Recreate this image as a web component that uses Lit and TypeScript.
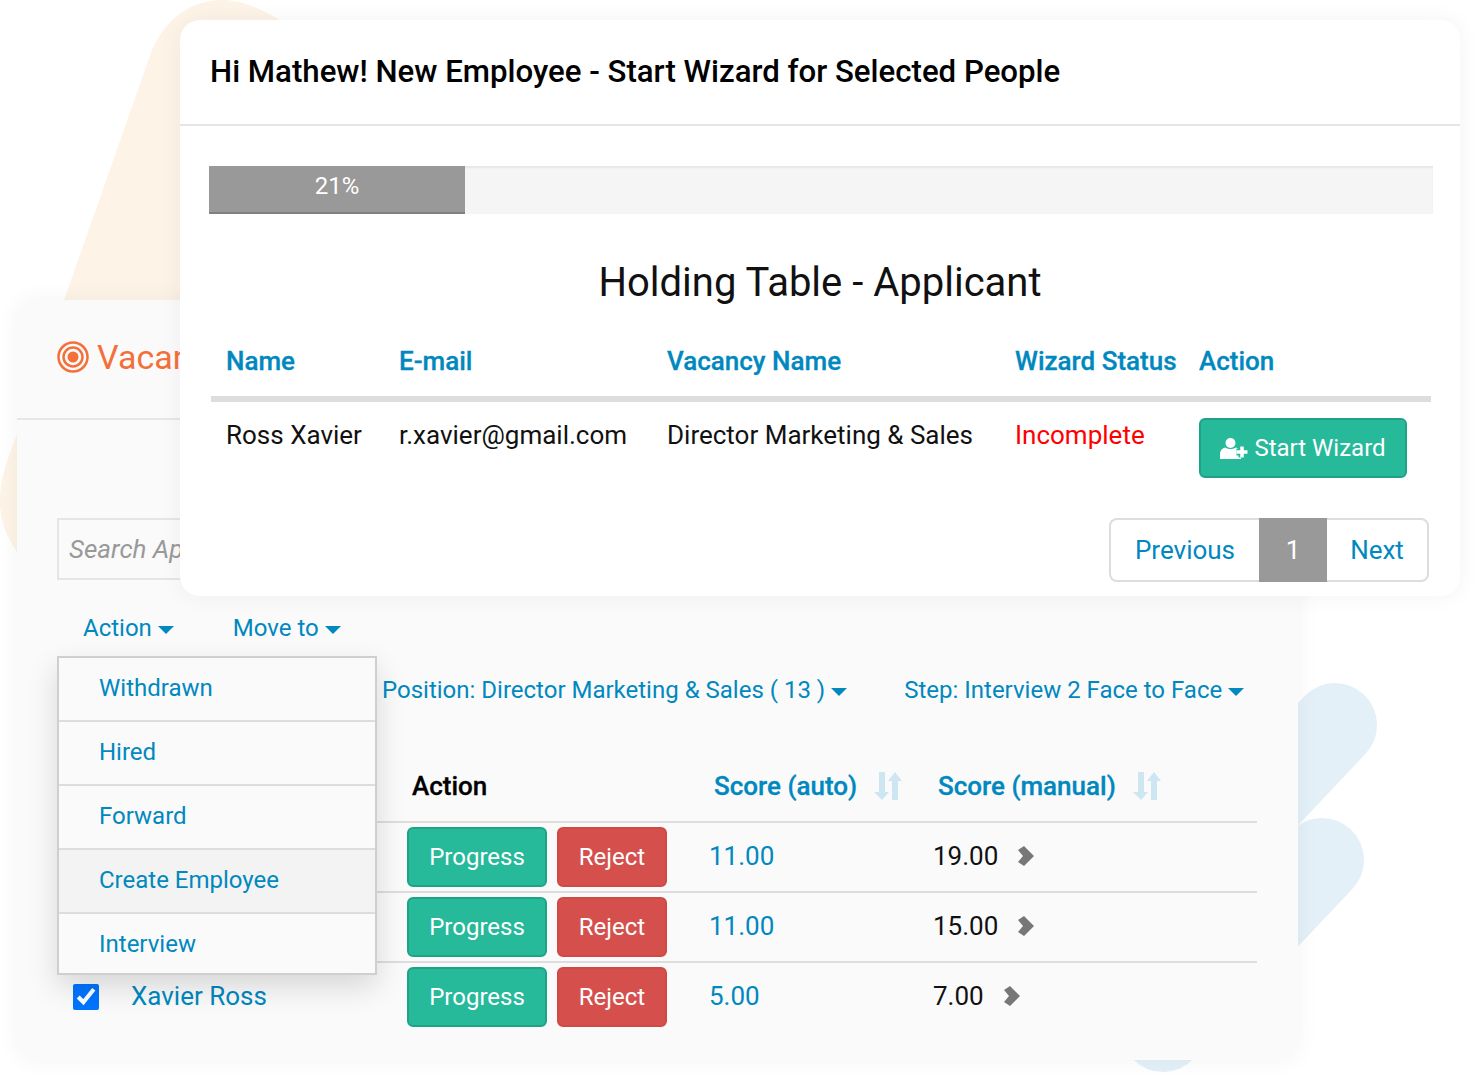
import { LitElement, html, css } from 'lit';
import { customElement } from 'lit/decorators.js';

const sortIcon = html`<svg class="sort" viewBox="0 0 28 28" width="28" height="28">
  <path d="M5 0h6v20h4l-7 8-8-8h5z"/><path d="M21 0l7 9h-4v19h-6V9h-4z"/>
</svg>`;

const chevron = html`<svg class="chev" viewBox="0 0 16 20" width="16" height="20">
  <path d="M0 4l6-4 10 10-10 10-6-4 5-6z"/>
</svg>`;

const applicants = [
  { name: '', auto: '11.00', manual: '19.00' },
  { name: '', auto: '11.00', manual: '15.00' },
  { name: 'Xavier Ross', auto: '5.00', manual: '7.00' },
];

const menuItems = ['Withdrawn', 'Hired', 'Forward', 'Create Employee', 'Interview'];

@customElement('app-root')
export class AppRoot extends LitElement {
  static styles = css`
    :host {
      display: block;
      width: 1481px;
      height: 1080px;
      font-family: Roboto, 'Liberation Sans', sans-serif;
      background: #fff;
      color: #111;
    }
    .stage {
      position: relative;
      width: 1481px;
      height: 1080px;
      overflow: hidden;
    }
    .blobs {
      position: absolute;
      left: 0;
      top: 0;
    }
    .card {
      position: absolute;
      box-sizing: border-box;
      border-radius: 20px;
      box-shadow: 0 0 24px rgba(0, 0, 0, 0.05);
    }
    /* back window */
    .back {
      left: 17px;
      top: 300px;
      width: 1281px;
      height: 760px;
      background: #fafafa;
    }
    .back-head {
      height: 120px;
      box-sizing: border-box;
      border-bottom: 2px solid #e6e6e6;
      padding-left: 40px;
      display: flex;
      align-items: center;
      gap: 8px;
      color: #f4703a;
      font-size: 34px;
      padding-bottom: 4px;
    }
    .back-body {
      padding: 98px 40px 0;
    }
    .search {
      box-sizing: border-box;
      width: 400px;
      height: 62px;
      border: 2px solid #e5e5e5;
      padding: 0 10px;
      display: flex;
      align-items: center;
      font-size: 26px;
      font-style: italic;
      color: #999;
    }
    .link {
      color: #0088bf;
    }
    .caret {
      display: inline-block;
      width: 0;
      height: 0;
      border-left: 8px solid transparent;
      border-right: 8px solid transparent;
      border-top: 8px solid #0088bf;
      vertical-align: middle;
      margin-left: 6px;
    }
    .toolbar {
      display: flex;
      height: 32px;
      margin-top: 32px;
      padding-left: 26px;
      gap: 59px;
      align-items: center;
      font-size: 24px;
    }
    .filters {
      display: flex;
      height: 32px;
      margin-top: 30px;
      padding-left: 325px;
      gap: 57px;
      align-items: center;
      font-size: 24px;
    }
    .grid {
      display: grid;
      grid-template-columns: 350px 303px 224px 323px;
      width: 1200px;
    }
    .thead {
      height: 70px;
      margin-top: 30px;
      padding-top: 15px;
      box-sizing: content-box;
      align-items: center;
      font-size: 26px;
      font-weight: 500;
      -webkit-text-stroke: 0.3px currentColor;
    }
    .thead > div {
      padding-left: 4px;
      display: flex;
      align-items: center;
      color: #0088bf;
    }
    .thead > .plain {
      color: #000;
      padding-left: 5px;
    }
    .sort {
      fill: #cde6f2;
      margin-left: 17px;
    }
    .trow {
      height: 70px;
      box-sizing: border-box;
      border-top: 2px solid #ddd;
      align-items: center;
      font-size: 26px;
    }
    .who {
      display: flex;
      align-items: center;
      padding-left: 16px;
      gap: 32px;
    }
    .who input {
      width: 26px;
      height: 26px;
      margin: 0;
    }
    .who span,
    .score,
    .manual {
      padding-bottom: 2px;
    }
    .score,
    .manual {
      margin-left: -1px;
    }
    .acts {
      display: flex;
      gap: 10px;
    }
    .btn {
      box-sizing: border-box;
      height: 60px;
      border-radius: 6px;
      display: flex;
      align-items: center;
      justify-content: center;
      color: #fff;
      font-size: 24px;
    }
    .green {
      background: #26b99a;
      border: 2px solid #1fa387;
    }
    .red {
      background: #d5504d;
      border: 2px solid #cf4945;
    }
    .w140 {
      width: 140px;
    }
    .w110 {
      width: 110px;
    }
    .manual {
      display: flex;
      align-items: center;
      gap: 20px;
    }
    .chev {
      fill: #777;
      filter: blur(0.4px);
    }
    .menu {
      position: absolute;
      left: 40px;
      top: 356px;
      width: 320px;
      box-sizing: border-box;
      background: #fafafa;
      border: 2px solid #cfcfcf;
      box-shadow: 0 12px 28px rgba(0, 0, 0, 0.14);
      font-size: 24px;
    }
    .menu div {
      height: 64px;
      box-sizing: border-box;
      display: flex;
      align-items: center;
      padding: 0 0 2px 40px;
      border-bottom: 2px solid #ddd;
    }
    .menu div:last-child {
      border-bottom: 0;
      height: 59px;
      padding-bottom: 0;
    }
    .menu .hover {
      background: #f3f3f3;
    }
    /* front window */
    .front {
      left: 180px;
      top: 20px;
      width: 1280px;
      height: 576px;
      background: #fff;
    }
    .front-head {
      height: 106px;
      box-sizing: border-box;
      border-bottom: 2px solid #e6e6e6;
      padding: 0 30px 2px;
      display: flex;
      align-items: center;
      font-size: 31.2px;
      font-weight: 500;
      color: #000;
    }
    .progress {
      display: flex;
      height: 48px;
      margin: 40px 27px 0 29px;
      background: #f5f5f5;
      box-shadow: inset 0 2px 2px rgba(0, 0, 0, 0.06);
    }
    .bar {
      box-sizing: border-box;
      height: 48px;
      background: #999;
      border-bottom: 2px solid #808080;
      color: #fff;
      font-size: 24px;
      text-align: center;
      padding-top: 6px;
    }
    h2 {
      margin: 45px 0 0;
      height: 48px;
      line-height: 48px;
      text-align: center;
      font-size: 40px;
      font-weight: 400;
      color: #111;
    }
    .table {
      margin: 33px 29px 0 31px;
      width: 1220px;
    }
    .cols {
      display: grid;
      grid-template-columns: 173px 268px 348px 184px 232px;
      font-size: 26px;
      padding-left: 15px;
      box-sizing: border-box;
    }
    .cols-head {
      height: 50px;
      padding-top: 6px;
      border-bottom: 6px solid #ddd;
      font-weight: 500;
      -webkit-text-stroke: 0.3px currentColor;
      color: #0088bf;
      box-sizing: content-box;
    }
    .cols-row {
      padding-top: 16px;
    }
    .cols-row > div:not(:last-child) {
      padding-top: 2px;
    }
    .red-text {
      color: #f00;
    }
    .wizard {
      width: 208px;
      gap: 6px;
    }
    .wizard svg {
      flex: none;
    }
    .pager {
      display: flex;
      justify-content: flex-end;
      margin: 40px 31px 0 0;
      font-size: 26px;
    }
    .pager div {
      box-sizing: border-box;
      height: 64px;
      display: flex;
      align-items: center;
      justify-content: center;
      border: 2px solid #ddd;
    }
    .pager .prev {
      width: 150px;
      border-right: 0;
      border-radius: 8px 0 0 8px;
    }
    .pager .cur {
      width: 68px;
      background: #999;
      border-color: #999;
      color: #fff;
    }
    .pager .next {
      width: 102px;
      border-left: 0;
      border-radius: 0 8px 8px 0;
    }
  `;

  renderBack() {
    return html`<section class="card back">
      <div class="back-head">
        <svg viewBox="0 0 32 32" width="32" height="32" fill="none" stroke="#f4703a" stroke-width="2.5">
          <circle cx="16" cy="16" r="14.500"></circle>
          <circle cx="16" cy="16" r="9.500"></circle>
          <circle cx="16" cy="16" r="5.500" fill="#f4703a" stroke="none"></circle>
        </svg>
        <span>Vacancy</span>
      </div>
      <div class="back-body">
        <div class="search">Search Applicant</div>
        <div class="toolbar link">
          <span>Action<i class="caret"></i></span>
          <span>Move to<i class="caret"></i></span>
        </div>
        <div class="filters link">
          <span>Position: Director Marketing &amp; Sales ( 13 )<i class="caret"></i></span>
          <span>Step: Interview 2 Face to Face<i class="caret"></i></span>
        </div>
        <div class="grid thead">
          <div></div>
          <div class="plain">Action</div>
          <div>Score (auto)${sortIcon}</div>
          <div>Score (manual)${sortIcon}</div>
        </div>
        ${applicants.map(
          (a) => html`<div class="grid trow">
            <div class="who">
              <input type="checkbox" checked />
              <span class="link">${a.name}</span>
            </div>
            <div class="acts">
              <div class="btn green w140">Progress</div>
              <div class="btn red w110">Reject</div>
            </div>
            <div class="link score">${a.auto}</div>
            <div class="manual">${a.manual}${chevron}</div>
          </div>`
        )}
      </div>
      <div class="menu link">
        ${menuItems.map(
          (m) => html`<div class=${m === 'Create Employee' ? 'hover' : ''}>${m}</div>`
        )}
      </div>
    </section>`;
  }

  renderFront() {
    return html`<section class="card front">
      <div class="front-head">Hi Mathew! New Employee - Start Wizard for Selected People</div>
      <div class="progress"><div class="bar" style="width: 256px">21%</div></div>
      <h2>Holding Table - Applicant</h2>
      <div class="table">
        <div class="cols cols-head">
          <div>Name</div>
          <div>E-mail</div>
          <div>Vacancy Name</div>
          <div>Wizard Status</div>
          <div>Action</div>
        </div>
        <div class="cols cols-row">
          <div>Ross Xavier</div>
          <div>r.xavier@gmail.com</div>
          <div>Director Marketing &amp; Sales</div>
          <div class="red-text">Incomplete</div>
          <div>
            <div class="btn green wizard">
              <svg viewBox="0 0 28 21" width="28" height="21">
                <circle cx="10.500" cy="5" r="5" fill="#fff"></circle>
                <path d="M0 21v-5q0-5 5-6.500 5.500 3 11 0 5 1.500 5 6.500v5z" fill="#fff"></path>
                <path d="M22 8.500v11M16.500 14h11" stroke="#26b99a" stroke-width="7"></path>
                <path d="M22 8.500v11M16.500 14h11" stroke="#fff" stroke-width="3.500"></path>
              </svg>
              Start Wizard
            </div>
          </div>
        </div>
      </div>
      <div class="pager">
        <div class="prev link">Previous</div>
        <div class="cur">1</div>
        <div class="next link">Next</div>
      </div>
    </section>`;
  }

  render() {
    return html`<div class="stage">
      <svg class="blobs" width="1481" height="1080" viewBox="0 0 1481 1080">
        <path
          fill="#fdf3e7"
          d="M223 0C190 0 165 20 152 50L13 445C-5 490-5 520 17 552H500V60C400 40 340 40 280 20 260 8 240 0 223 0Z"
        ></path>
        <g stroke="#e3f0f8" stroke-width="84" stroke-linecap="round">
          <path d="M1335 725L1200 868"></path>
          <path d="M1322 860L1187 1003"></path>
          <path d="M1163 1030L1230 960"></path>
        </g>
      </svg>
      ${this.renderBack()} ${this.renderFront()}
    </div>`;
  }
}
